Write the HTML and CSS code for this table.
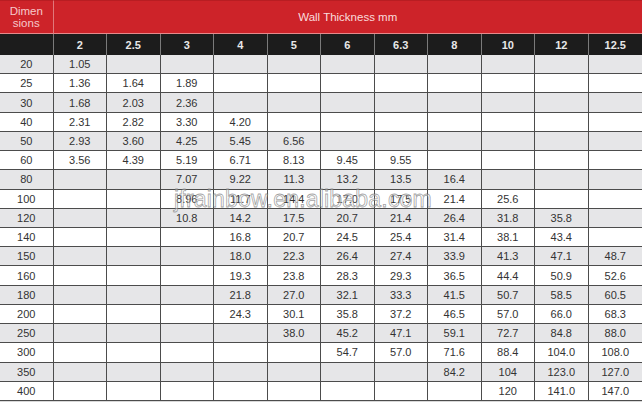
FILE: index.html
```html
<!DOCTYPE html>
<html>
<head>
<meta charset="utf-8">
<link rel="stylesheet" href="styles.css">
</head>
<body>
<div class="sheet">
  <div class="grid">
    <div class="row top">
      <div class="dim-head">Dimen<br>sions</div>
      <div class="wall-head">Wall Thickness mm</div>
    </div>
    <div class="row sub">
      <div></div><div>2</div><div>2.5</div><div>3</div><div>4</div><div>5</div><div>6</div><div>6.3</div><div>8</div><div>10</div><div>12</div><div>12.5</div>
    </div>
    <div class="row data alt"><div>20</div><div>1.05</div><div></div><div></div><div></div><div></div><div></div><div></div><div></div><div></div><div></div><div></div></div>
    <div class="row data"><div>25</div><div>1.36</div><div>1.64</div><div>1.89</div><div></div><div></div><div></div><div></div><div></div><div></div><div></div><div></div></div>
    <div class="row data alt"><div>30</div><div>1.68</div><div>2.03</div><div>2.36</div><div></div><div></div><div></div><div></div><div></div><div></div><div></div><div></div></div>
    <div class="row data"><div>40</div><div>2.31</div><div>2.82</div><div>3.30</div><div>4.20</div><div></div><div></div><div></div><div></div><div></div><div></div><div></div></div>
    <div class="row data alt"><div>50</div><div>2.93</div><div>3.60</div><div>4.25</div><div>5.45</div><div>6.56</div><div></div><div></div><div></div><div></div><div></div><div></div></div>
    <div class="row data"><div>60</div><div>3.56</div><div>4.39</div><div>5.19</div><div>6.71</div><div>8.13</div><div>9.45</div><div>9.55</div><div></div><div></div><div></div><div></div></div>
    <div class="row data alt"><div>80</div><div></div><div></div><div>7.07</div><div>9.22</div><div>11.3</div><div>13.2</div><div>13.5</div><div>16.4</div><div></div><div></div><div></div></div>
    <div class="row data"><div>100</div><div></div><div></div><div>8.96</div><div>11.7</div><div>14.4</div><div>17.0</div><div>17.5</div><div>21.4</div><div>25.6</div><div></div><div></div></div>
    <div class="row data alt"><div>120</div><div></div><div></div><div>10.8</div><div>14.2</div><div>17.5</div><div>20.7</div><div>21.4</div><div>26.4</div><div>31.8</div><div>35.8</div><div></div></div>
    <div class="row data"><div>140</div><div></div><div></div><div></div><div>16.8</div><div>20.7</div><div>24.5</div><div>25.4</div><div>31.4</div><div>38.1</div><div>43.4</div><div></div></div>
    <div class="row data alt"><div>150</div><div></div><div></div><div></div><div>18.0</div><div>22.3</div><div>26.4</div><div>27.4</div><div>33.9</div><div>41.3</div><div>47.1</div><div>48.7</div></div>
    <div class="row data"><div>160</div><div></div><div></div><div></div><div>19.3</div><div>23.8</div><div>28.3</div><div>29.3</div><div>36.5</div><div>44.4</div><div>50.9</div><div>52.6</div></div>
    <div class="row data alt"><div>180</div><div></div><div></div><div></div><div>21.8</div><div>27.0</div><div>32.1</div><div>33.3</div><div>41.5</div><div>50.7</div><div>58.5</div><div>60.5</div></div>
    <div class="row data"><div>200</div><div></div><div></div><div></div><div>24.3</div><div>30.1</div><div>35.8</div><div>37.2</div><div>46.5</div><div>57.0</div><div>66.0</div><div>68.3</div></div>
    <div class="row data alt"><div>250</div><div></div><div></div><div></div><div></div><div>38.0</div><div>45.2</div><div>47.1</div><div>59.1</div><div>72.7</div><div>84.8</div><div>88.0</div></div>
    <div class="row data"><div>300</div><div></div><div></div><div></div><div></div><div></div><div>54.7</div><div>57.0</div><div>71.6</div><div>88.4</div><div>104.0</div><div>108.0</div></div>
    <div class="row data alt"><div>350</div><div></div><div></div><div></div><div></div><div></div><div></div><div></div><div>84.2</div><div>104</div><div>123.0</div><div>127.0</div></div>
    <div class="row data"><div>400</div><div></div><div></div><div></div><div></div><div></div><div></div><div></div><div></div><div>120</div><div>141.0</div><div>147.0</div></div>
  </div>
  <div class="watermark">jfrainbow.en.alibaba.com</div>
</div>
</body>
</html>
```

FILE: styles.css
```css
html, body {
  margin: 0;
  padding: 0;
  background: #ffffff;
}

.sheet {
  position: relative;
  width: 642px;
  height: 402px;
  overflow: hidden;
  font-family: "Liberation Sans", Arial, sans-serif;
}

.grid {
  display: grid;
  grid-template-columns: repeat(12, 1fr);
  grid-template-rows: 34px 21px repeat(18, 1fr);
  height: 401px;
  border-bottom: 1px solid #d8d8d8;
}

.row {
  display: contents;
}

.row > div {
  display: flex;
  align-items: center;
  justify-content: center;
}

.top > div {
  background: #cd2329;
  border-top: 1px solid #b81d22;
  border-bottom: 1px solid #e58a8c;
}

.dim-head {
  color: #f6c9c9;
  font-size: 11.5px;
  line-height: 12px;
  text-align: center;
  border-right: 1px solid #e0787b;
}

.wall-head {
  grid-column: 2 / span 11;
  color: #fadcdc;
  font-size: 11.5px;
}

.sub > div {
  background: #1c1c1c;
  color: #e8e8e8;
  font-size: 11px;
  font-weight: bold;
  border-right: 1px solid #7a7a7a;
}

.sub > div:last-child {
  border-right: none;
}

.data > div {
  background: #ffffff;
  color: #333333;
  font-size: 11px;
  border-right: 1px solid #4c4c4c;
  border-bottom: 1px solid #4c4c4c;
}

.data > div:last-child {
  border-right: none;
}

.data.alt > div {
  background: #e6e6e8;
}

.watermark {
  position: absolute;
  left: 174px;
  top: 186px;
  font-family: "Liberation Sans", Arial, sans-serif;
  font-size: 23px;
  color: rgba(255, 255, 255, 0.45);
  -webkit-text-stroke: 0.8px rgba(100, 100, 100, 0.6);
  letter-spacing: 0.2px;
  pointer-events: none;
}
```
